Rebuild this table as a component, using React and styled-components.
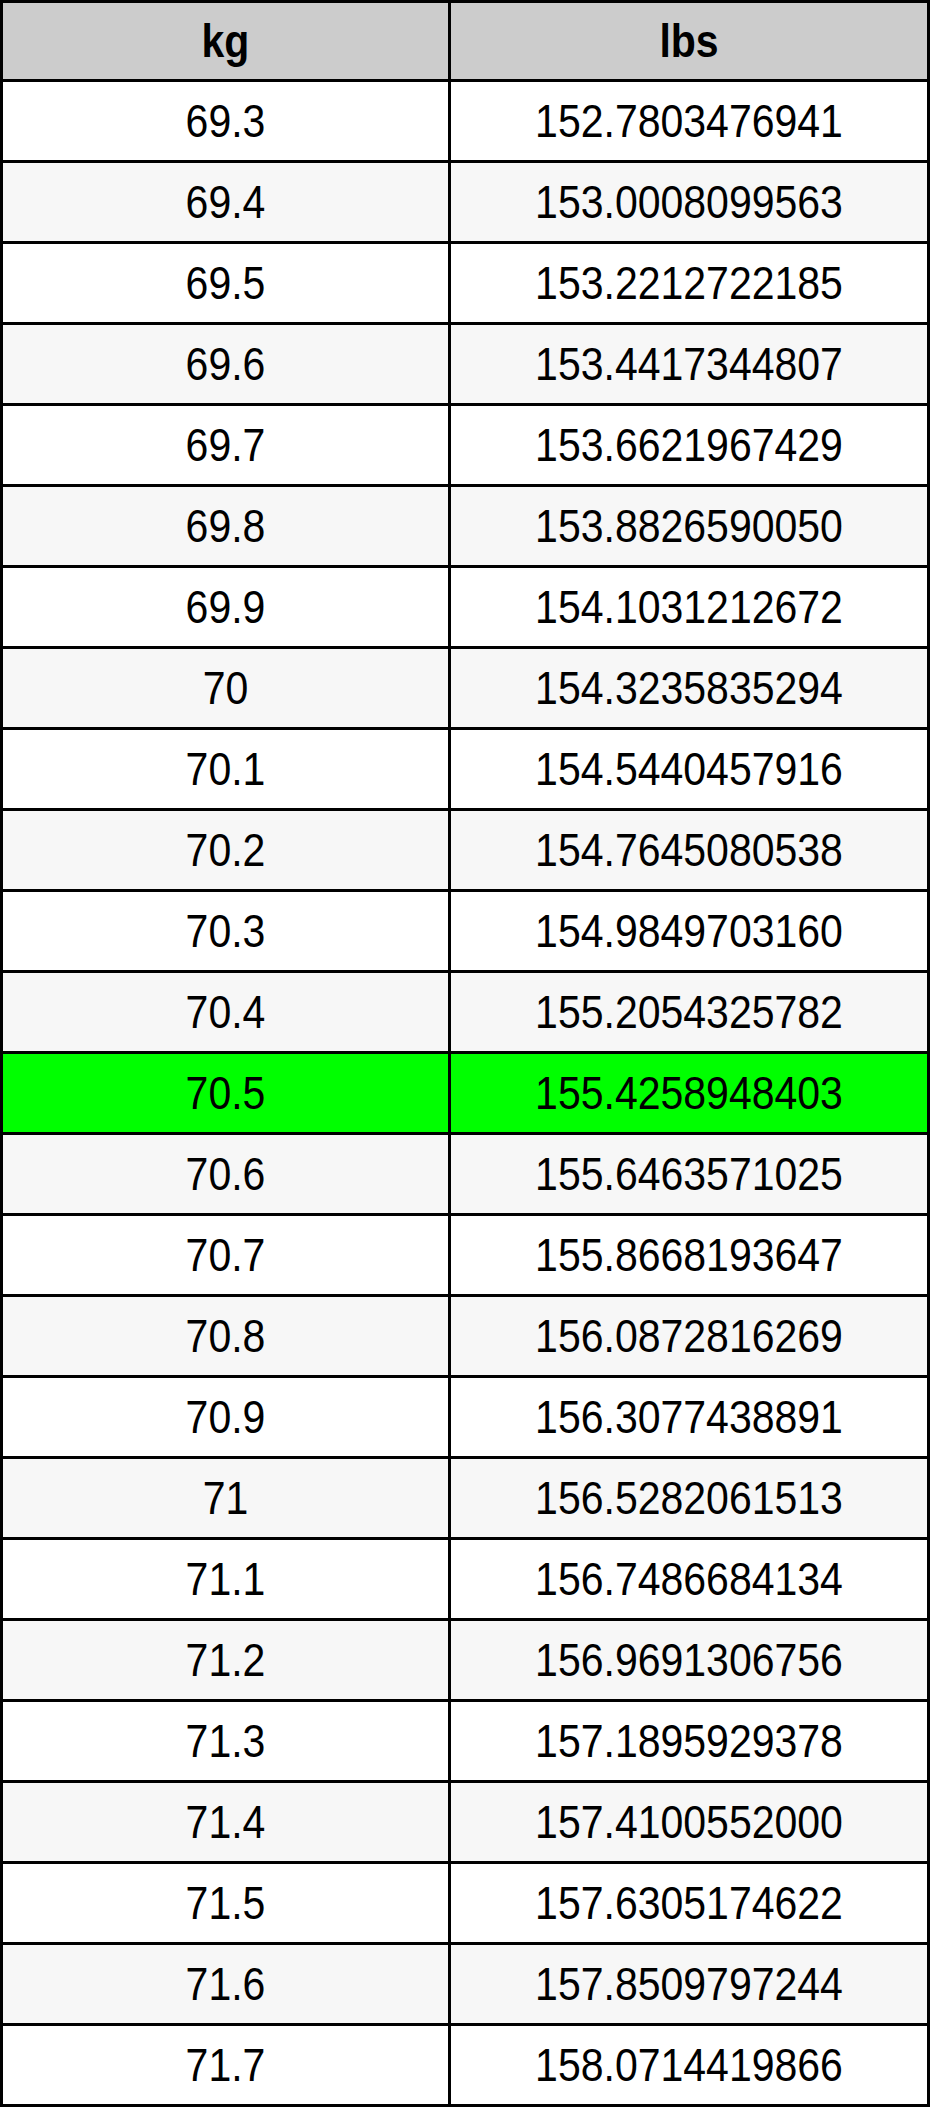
import React from 'react';
import styled, { createGlobalStyle } from 'styled-components';

const GlobalStyle = createGlobalStyle`
  html, body {
    margin: 0;
    padding: 0;
    background: #ffffff;
  }
`;

const Table = styled.div`
  width: 930px;
  box-sizing: border-box;
  display: grid;
  grid-template-columns: 445px 476px;
  grid-template-rows: 76px;
  grid-auto-rows: 78px;
  gap: 3px;
  padding: 3px;
  background: #000000;
  font-family: "Liberation Sans", Arial, sans-serif;
`;

const Cell = styled.div`
  display: flex;
  align-items: center;
  justify-content: center;
  font-size: 41px;
  line-height: 1;
  color: #000000;
  background: ${({ $bg }) => $bg};
  font-weight: ${({ $head }) => ($head ? 700 : 400)};
`;

// the reference glyphs are a little taller than Arial at the same width
const Text = styled.span`
  display: inline-block;
  transform: scaleY(1.12);
`;

const rows = [
  ['69.3', '152.7803476941'],
  ['69.4', '153.0008099563'],
  ['69.5', '153.2212722185'],
  ['69.6', '153.4417344807'],
  ['69.7', '153.6621967429'],
  ['69.8', '153.8826590050'],
  ['69.9', '154.1031212672'],
  ['70', '154.3235835294'],
  ['70.1', '154.5440457916'],
  ['70.2', '154.7645080538'],
  ['70.3', '154.9849703160'],
  ['70.4', '155.2054325782'],
  ['70.5', '155.4258948403'],
  ['70.6', '155.6463571025'],
  ['70.7', '155.8668193647'],
  ['70.8', '156.0872816269'],
  ['70.9', '156.3077438891'],
  ['71', '156.5282061513'],
  ['71.1', '156.7486684134'],
  ['71.2', '156.9691306756'],
  ['71.3', '157.1895929378'],
  ['71.4', '157.4100552000'],
  ['71.5', '157.6305174622'],
  ['71.6', '157.8509797244'],
  ['71.7', '158.0714419866'],
];

const rowBg = (kg, i) => {
  if (kg === '70.5') return '#00ff00';
  return i % 2 === 0 ? '#ffffff' : '#f7f7f7';
};

export default function App() {
  return (
    <>
      <GlobalStyle />
      <Table>
        <Cell $head $bg="#cccccc"><Text>kg</Text></Cell>
        <Cell $head $bg="#cccccc"><Text>lbs</Text></Cell>
        {rows.map(([kg, lbs], i) => (
          <React.Fragment key={kg}>
            <Cell $bg={rowBg(kg, i)}><Text>{kg}</Text></Cell>
            <Cell $bg={rowBg(kg, i)}><Text>{lbs}</Text></Cell>
          </React.Fragment>
        ))}
      </Table>
    </>
  );
}
